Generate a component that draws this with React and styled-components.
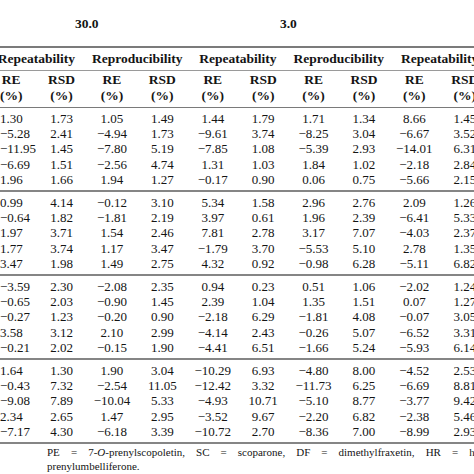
import React from 'react';
import styled, { createGlobalStyle } from 'styled-components';

const GlobalStyle = createGlobalStyle`
  html, body {
    margin: 0;
    padding: 0;
    background: #fff;
  }
`;

const Page = styled.div`
  width: 474px;
  height: 474px;
  overflow: hidden;
  background: #fff;
  color: #141414;
  font-family: "Liberation Serif", "Times New Roman", serif;
`;

const Table = styled.table`
  border-collapse: collapse;
  table-layout: fixed;
  width: 504px;
  margin-left: -14px;
`;

const TitleCell = styled.th`
  font-size: 13.5px;
  font-weight: 700;
  line-height: 14px;
  padding: 17px 0 15px;
  text-align: center;
  border-bottom: 2px solid #7b7b7b;
`;

const GroupCell = styled.th`
  font-size: 13.5px;
  font-weight: 700;
  line-height: 14px;
  padding: 4px 0;
  text-align: center;
  white-space: nowrap;
  border-bottom: 1px solid #9a9a9a;
`;

const SubCell = styled.th`
  font-size: 13.5px;
  font-weight: 700;
  line-height: 16px;
  padding: 1px 0 3px;
  text-align: center;
  border-bottom: 1px solid #7a7a7a;
`;

const Cell = styled.td`
  font-size: 13px;
  line-height: 15.4px;
  white-space: nowrap;
  text-align: ${({ $first }) => ($first ? 'left' : 'center')};
  padding: ${({ $start, $end }) => `${$start ? 2.5 : 0}px 0 ${$end ? 2.5 : 0}px`};
  padding-left: ${({ $first }) => ($first ? '14px' : '0')};
  border-bottom: ${({ $end }) => ($end ? '2px solid #858585' : 'none')};
`;

const Footnote = styled.div`
  margin: 2px 0 0 47px;
  font-size: 11px;
  line-height: 13.5px;
  white-space: nowrap;
`;

const FootLine = styled.div`
  word-spacing: ${({ $spread }) => ($spread ? '8.3px' : '0')};
`;

const groups = [
  [
    ['1.30', '1.73', '1.05', '1.49', '1.44', '1.79', '1.71', '1.34', '8.66', '1.45'],
    ['-5.28', '2.41', '-4.94', '1.73', '-9.61', '3.74', '-8.25', '3.04', '-6.67', '3.52'],
    ['-11.95', '1.45', '-7.80', '5.19', '-7.85', '1.08', '-5.39', '2.93', '-14.01', '6.31'],
    ['-6.69', '1.51', '-2.56', '4.74', '1.31', '1.03', '1.84', '1.02', '-2.18', '2.84'],
    ['1.96', '1.66', '1.94', '1.27', '-0.17', '0.90', '0.06', '0.75', '-5.66', '2.15'],
  ],
  [
    ['0.99', '4.14', '-0.12', '3.10', '5.34', '1.58', '2.96', '2.76', '2.09', '1.26'],
    ['-0.64', '1.82', '-1.81', '2.19', '3.97', '0.61', '1.96', '2.39', '-6.41', '5.33'],
    ['1.97', '3.71', '1.54', '2.46', '7.81', '2.78', '3.17', '7.07', '-4.03', '2.37'],
    ['1.77', '3.74', '1.17', '3.47', '-1.79', '3.70', '-5.53', '5.10', '2.78', '1.35'],
    ['3.47', '1.98', '1.49', '2.75', '4.32', '0.92', '-0.98', '6.28', '-5.11', '6.82'],
  ],
  [
    ['-3.59', '2.30', '-2.08', '2.35', '0.94', '0.23', '0.51', '1.06', '-2.02', '1.24'],
    ['-0.65', '2.03', '-0.90', '1.45', '2.39', '1.04', '1.35', '1.51', '0.07', '1.27'],
    ['-0.27', '1.23', '-0.20', '0.90', '-2.18', '6.29', '-1.81', '4.08', '-0.07', '3.05'],
    ['3.58', '3.12', '2.10', '2.99', '-4.14', '2.43', '-0.26', '5.07', '-6.52', '3.31'],
    ['-0.21', '2.02', '-0.15', '1.90', '-4.41', '6.51', '-1.66', '5.24', '-5.93', '6.14'],
  ],
  [
    ['1.64', '1.30', '1.90', '3.04', '-10.29', '6.93', '-4.80', '8.00', '-4.52', '2.53'],
    ['-0.43', '7.32', '-2.54', '11.05', '-12.42', '3.32', '-11.73', '6.25', '-6.69', '8.81'],
    ['-9.08', '7.89', '-10.04', '5.33', '-4.93', '10.71', '-5.10', '8.77', '-3.77', '9.42'],
    ['2.34', '2.65', '1.47', '2.95', '-3.52', '9.67', '-2.20', '6.82', '-2.38', '5.46'],
    ['-7.17', '4.30', '-6.18', '3.39', '-10.72', '2.70', '-8.36', '7.00', '-8.99', '2.93'],
  ],
];

const precisionGroups = ['Repeatability', 'Reproducibility', 'Repeatability', 'Reproducibility', 'Repeatability'];

const fmt = (v) => v.replace('-', '\u2212');

const App = () => {
  return (
    <>
      <GlobalStyle />
      <Page>
        <Table>
          <colgroup>
            {Array.from({ length: 10 }).map((_, i) => (
              <col key={i} style={{ width: '50.4px' }} />
            ))}
          </colgroup>
          <thead>
            <tr>
              <TitleCell colSpan={4}>30.0</TitleCell>
              <TitleCell colSpan={4}>3.0</TitleCell>
              <TitleCell colSpan={2} />
            </tr>
            <tr>
              {precisionGroups.map((g, i) => (
                <GroupCell key={i} colSpan={2}>
                  {g}
                </GroupCell>
              ))}
            </tr>
            <tr>
              {Array.from({ length: 10 }).map((_, i) => (
                <SubCell key={i}>
                  {i % 2 === 0 ? 'RE' : 'RSD'}
                  <br />
                  (%)
                </SubCell>
              ))}
            </tr>
          </thead>
          <tbody>
            {groups.map((rows, g) =>
              rows.map((row, r) => (
                <tr key={`${g}-${r}`}>
                  {row.map((v, c) => (
                    <Cell key={c} $first={c === 0} $start={r === 0} $end={r === rows.length - 1}>
                      {fmt(v)}
                    </Cell>
                  ))}
                </tr>
              ))
            )}
          </tbody>
        </Table>
        <Footnote>
          <FootLine $spread>
            PE = 7-<i>O</i>-prenylscopoletin, SC = scoparone, DF = dimethylfraxetin, HR = heraclenin, PU = 7-<i>O</i>-
          </FootLine>
          <FootLine>prenylumbelliferone.</FootLine>
        </Footnote>
      </Page>
    </>
  );
};

export default App;
